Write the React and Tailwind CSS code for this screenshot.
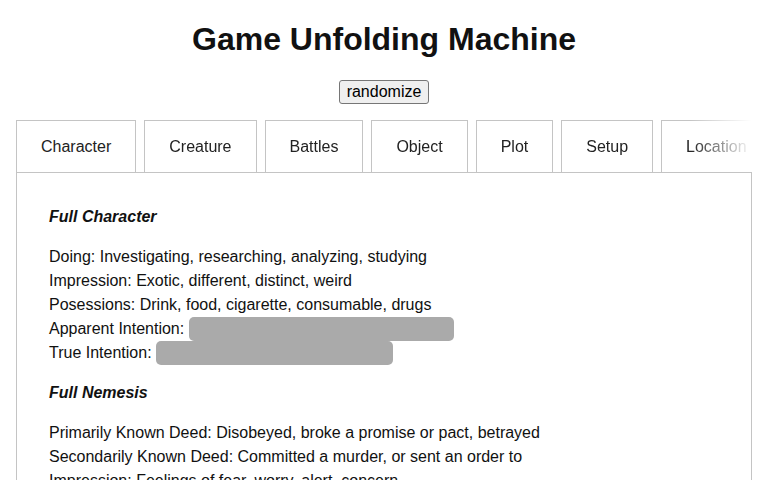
import React, { useState } from 'react';

const tabs = ['Character', 'Creature', 'Battles', 'Object', 'Plot', 'Setup', 'Location', 'Faction'];

const Hidden = ({ width }) => (
  <span className={`inline-block h-[24px] align-top rounded-[5px] bg-[#aaaaaa] ${width}`} />
);

const App = () => {
  const [active, setActive] = useState('Character');

  return (
    <div className="min-h-screen bg-white px-4 text-[#111] font-['Liberation_Sans',Arial,sans-serif]">
      <h1 className="pt-[21px] text-center text-[32px] font-bold leading-[37px]">
        Game Unfolding Machine
      </h1>
      <div className="mt-[22px] mb-4 text-center">
        <button className="h-[24px] rounded-[3px] border border-[#767676] bg-[#efefef] px-[7px] text-base leading-[20px] text-black">
          randomize
        </button>
      </div>

      <div className="flex gap-2 overflow-hidden [mask-image:linear-gradient(to_right,black_calc(100%-62px),transparent)]">
        {tabs.map(tab => (
          <button
            key={tab}
            onClick={() => setActive(tab)}
            className={`relative z-10 -mb-px shrink-0 border border-[#c4c4c4] px-6 py-4 text-base leading-[19px] text-[#222] ${
              active === tab ? 'border-b-white bg-white' : 'bg-white'
            }`}
          >
            {tab}
          </button>
        ))}
      </div>

      <div className="border border-[#c4c4c4] p-8 text-base leading-6">
        <p className="font-bold italic">Full Character</p>
        <div className="mt-4">
          <p>Doing: Investigating, researching, analyzing, studying</p>
          <p>Impression: Exotic, different, distinct, weird</p>
          <p>Posessions: Drink, food, cigarette, consumable, drugs</p>
          <p>
            Apparent Intention: <Hidden width="w-[265px]" />
          </p>
          <p>
            True Intention: <Hidden width="w-[237px]" />
          </p>
        </div>

        <p className="mt-4 font-bold italic">Full Nemesis</p>
        <div className="mt-4">
          <p>Primarily Known Deed: Disobeyed, broke a promise or pact, betrayed</p>
          <p>Secondarily Known Deed: Committed a murder, or sent an order to</p>
          <p>Impression: Feelings of fear, worry, alert, concern</p>
          <p>Posessions: Weapon, armor, shield, tool</p>
          <p>
            Apparent Intention: <Hidden width="w-[240px]" />
          </p>
        </div>
      </div>
    </div>
  );
};

export default App;
